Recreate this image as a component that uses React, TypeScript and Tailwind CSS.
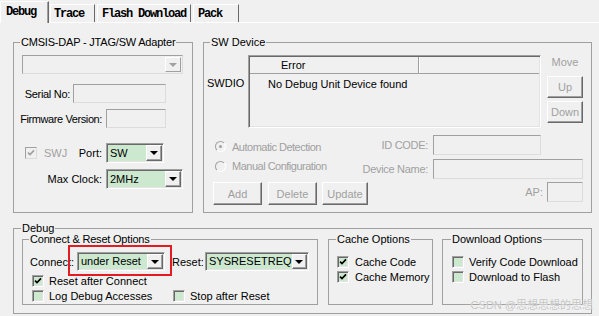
import React from "react";

const sunken =
  "border border-t-[#a0a0a0] border-l-[#a0a0a0] border-r-white border-b-white shadow-[inset_1px_1px_0_#696969,inset_-1px_-1px_0_#e3e3e3]";
const soft =
  "border border-t-[#a0a0a0] border-l-[#a0a0a0] border-r-[#dcdcdc] border-b-[#dcdcdc]";
const raised =
  "border border-t-white border-l-white border-r-[#696969] border-b-[#696969] shadow-[inset_-1px_-1px_0_#a0a0a0]";
const raisedLight =
  "border border-t-white border-l-white border-r-[#a0a0a0] border-b-[#a0a0a0]";

function Arrow({ gray }: { gray?: boolean }) {
  return (
    <span
      className={`w-0 h-0 border-x-[4px] border-x-transparent border-t-[4px] ${
        gray ? "border-t-[#a0a0a0]" : "border-t-black"
      }`}
    />
  );
}

function Combo({ className, text }: { className: string; text: string }) {
  return (
    <div className={`${sunken} bg-[#cce8cf] flex p-[1px] ${className}`}>
      <span className="flex-1 flex items-center pl-[2px] leading-none">{text}</span>
      <span className={`${raised} bg-[#f0f0f0] w-[16px] flex items-center justify-center`}>
        <Arrow />
      </span>
    </div>
  );
}

function Field({ className }: { className: string }) {
  return <div className={`${soft} bg-[#f0f0f0] ${className}`} />;
}

function Check({ checked, disabled }: { checked?: boolean; disabled?: boolean }) {
  return (
    <span
      className={`${disabled ? soft : sunken} w-[12px] h-[12px] flex items-center justify-center shrink-0 ${
        disabled ? "bg-[#f0f0f0]" : "bg-[#cce8cf]"
      }`}
    >
      {checked && (
        <svg width="8" height="8" viewBox="0 0 8 8">
          <path
            d="M1 3.6 L3 5.6 L7 1.4"
            fill="none"
            stroke={disabled ? "#a0a0a0" : "#000"}
            strokeWidth="1.7"
          />
        </svg>
      )}
    </span>
  );
}

function Radio({ selected }: { selected?: boolean }) {
  return (
    <span className="w-[11px] h-[11px] rounded-full border border-t-[#a0a0a0] border-l-[#a0a0a0] border-r-white border-b-white bg-[#f0f0f0] flex items-center justify-center shrink-0">
      {selected && <span className="w-[3px] h-[3px] rounded-full bg-[#a0a0a0]" />}
    </span>
  );
}

function Btn({ className, label }: { className: string; label: string }) {
  return (
    <div className={`${raised} flex items-center justify-center text-[#a0a0a0] ${className}`}>
      {label}
    </div>
  );
}

export default function App() {
  return (
    <div className="font-['Liberation_Sans',Arial,sans-serif] relative w-[599px] h-[316px] overflow-hidden bg-[#f0f0f0] text-[11px] leading-[14px] text-black whitespace-nowrap">
      {/* tabs */}
      <div className="flex items-end h-[22px] font-['Liberation_Mono',monospace] font-bold text-[12px] tracking-[-1.2px] leading-[14px]">
        <div className="relative z-10 mb-[-1px] h-[22px] w-[49px] border-t border-l border-r border-t-white border-l-white border-r-[#696969] shadow-[inset_-1px_0_0_#a0a0a0] bg-[#f0f0f0] pl-[5px] pt-[3px]">
          Debug
        </div>
        <div className="ml-[1px] h-[18px] w-[45px] border-t border-l border-r border-t-white border-l-white border-r-[#696969] pl-[3px] pt-[2px]">
          Trace
        </div>
        <div className="ml-[2px] h-[18px] w-[94px] border-t border-l border-r border-t-white border-l-white border-r-[#696969] pl-[4px] pt-[2px]">
          Flash Download
        </div>
        <div className="ml-[2px] h-[18px] w-[46px] border-t border-l border-r border-t-white border-l-white border-r-[#696969] pl-[4px] pt-[2px]">
          Pack
        </div>
      </div>

      <div className="border-t border-white pt-[12px] pl-[13px]">
        <div className="flex">
          {/* adapter */}
          <fieldset className="w-[180px] h-[178px] border border-[#a0a0a0]">
            <legend className="ml-[6px] px-[1px] tracking-[-0.2px]">CMSIS-DAP - JTAG/SW Adapter</legend>
            <div className={`${soft} ml-[8px] mt-[6px] w-[161px] h-[19px] flex justify-end p-[1px]`}>
              <span className={`${raisedLight} w-[16px] flex items-center justify-center`}>
                <Arrow gray />
              </span>
            </div>
            <div className="flex items-center mt-[10px] h-[19px]">
              <span className="w-[56px] text-right tracking-[-0.3px]">Serial No:</span>
              <Field className="ml-[3px] w-[93px] h-[19px]" />
            </div>
            <div className="flex items-center mt-[6px] h-[19px]">
              <span className="w-[88px] text-right tracking-[-0.4px]">Firmware Version:</span>
              <Field className="ml-[4px] w-[60px] h-[19px]" />
            </div>
            <div className="flex items-center mt-[15px] h-[20px]">
              <div className="w-[88px] flex items-center self-stretch">
                <span className="ml-[11px]">
                  <Check checked disabled />
                </span>
                <span className="ml-[7px] text-[#a0a0a0]">SWJ</span>
                <span className="ml-auto">Port:</span>
              </div>
              <Combo className="ml-[4px] w-[58px] h-[20px]" text="SW" />
            </div>
            <div className="flex items-center mt-[6px] h-[20px]">
              <span className="w-[88px] text-right">Max Clock:</span>
              <Combo className="ml-[4px] w-[77px] h-[20px]" text="2MHz" />
            </div>
          </fieldset>

          {/* sw device */}
          <fieldset className="ml-[10px] w-[389px] h-[178px] border border-[#a0a0a0]">
            <legend className="ml-[6px] px-[1px]">SW Device</legend>
            <div className="flex mt-[6px]">
              <div className="w-[44px] pl-[3px] pt-[21px]">SWDIO</div>
              <div className={`${sunken} w-[293px] h-[73px] p-[1px]`}>
                <div className="flex h-[17px] border-b border-[#a0a0a0]">
                  <div className="w-[169px] border-r border-[#a0a0a0] pl-[31px] leading-[16px]">Error</div>
                  <div className="flex-1 border-l border-white" />
                </div>
                <div className="pl-[18px] pt-[3px]">No Debug Unit Device found</div>
              </div>
              <div className="ml-[6px] w-[36px] flex flex-col">
                <div className="text-center text-[#a0a0a0]">Move</div>
                <Btn className="mt-[7px] h-[22px]" label="Up" />
                <Btn className="mt-[3px] h-[22px]" label="Down" />
              </div>
            </div>

            <div className="flex items-center mt-[7px] h-[20px]">
              <div className="w-[229px] flex items-center self-stretch">
                <div className="flex items-center ml-[11px] mt-[3px]">
                  <Radio selected />
                  <span className="ml-[6px] text-[#a0a0a0] tracking-[-0.5px]">Automatic Detection</span>
                </div>
                <span className="ml-auto pr-[5px] text-[#a0a0a0] tracking-[-0.3px]">ID CODE:</span>
              </div>
              <Field className="w-[108px] h-[20px]" />
            </div>
            <div className="flex items-center mt-[4px] h-[20px]">
              <div className="w-[229px] flex items-center self-stretch">
                <div className="flex items-center ml-[11px] mt-[-6px]">
                  <Radio />
                  <span className="ml-[6px] text-[#a0a0a0] tracking-[-0.5px]">Manual Configuration</span>
                </div>
                <span className="ml-auto pr-[5px] text-[#a0a0a0] tracking-[-0.3px]">Device Name:</span>
              </div>
              <Field className="w-[150px] h-[20px]" />
            </div>
            <div className="flex items-start mt-[3px]">
              <Btn className="ml-[9px] w-[49px] h-[23px]" label="Add" />
              <Btn className="ml-[6px] w-[49px] h-[23px]" label="Delete" />
              <Btn className="ml-[5px] w-[46px] h-[23px]" label="Update" />
              <span className="ml-auto leading-[20px] text-[#a0a0a0]">AP:</span>
              <Field className="ml-[4px] mr-[8px] w-[36px] h-[20px]" />
            </div>
          </fieldset>
        </div>

        {/* debug */}
        <fieldset className="mt-[8px] w-[579px] h-[93px] border border-[#a0a0a0]">
          <legend className="ml-[7px] px-[1px]">Debug</legend>
          <div className="flex items-start pl-[8px] mt-[-3px]">
            <fieldset className="w-[296px] h-[73px] border border-[#a0a0a0]">
              <legend className="ml-[6px] px-[1px] tracking-[-0.2px]">Connect &amp; Reset Options</legend>
              <div className="flex items-center mt-[6px] h-[19px] pl-[7px]">
                <span className="w-[47px]">Connect:</span>
                <Combo className="w-[88px] h-[19px]" text="under Reset" />
                <span className="w-[40px] pl-[7px]">Reset:</span>
                <Combo className="w-[104px] h-[19px]" text="SYSRESETREQ" />
              </div>
              <div className="flex items-center mt-[3px] h-[14px] pl-[9px]">
                <Check checked />
                <span className="ml-[5px]">Reset after Connect</span>
              </div>
              <div className="flex items-center mt-[1px] h-[14px] pl-[9px]">
                <div className="w-[141px] flex items-center">
                  <Check />
                  <span className="ml-[5px]">Log Debug Accesses</span>
                </div>
                <Check />
                <span className="ml-[5px]">Stop after Reset</span>
              </div>
            </fieldset>

            <fieldset className="ml-[10px] w-[105px] h-[73px] border border-[#a0a0a0]">
              <legend className="ml-[7px] px-[1px]">Cache Options</legend>
              <div className="flex items-center mt-[9px] h-[14px] pl-[8px]">
                <Check checked />
                <span className="ml-[6px]">Cache Code</span>
              </div>
              <div className="flex items-center mt-[1px] h-[14px] pl-[8px]">
                <Check checked />
                <span className="ml-[6px]">Cache Memory</span>
              </div>
            </fieldset>

            <fieldset className="ml-[9px] w-[141px] h-[73px] border border-[#a0a0a0]">
              <legend className="ml-[8px] px-[1px]">Download Options</legend>
              <div className="flex items-center mt-[9px] h-[14px] pl-[9px]">
                <Check />
                <span className="ml-[5px]">Verify Code Download</span>
              </div>
              <div className="flex items-center mt-[1px] h-[14px] pl-[9px]">
                <Check />
                <span className="ml-[5px]">Download to Flash</span>
              </div>
            </fieldset>
          </div>
        </fieldset>
      </div>

      {/* annotation + watermark */}
      <div className="absolute left-[68px] top-[245px] w-[104px] h-[31px] border-2 border-[#e31b23]" />
      <div className="absolute right-[6px] bottom-[4px] text-[11px] text-[#c4c4c4] font-['Liberation_Sans','Noto_Sans_CJK_SC',sans-serif] [text-shadow:0_0_1px_#fff]">
        CSDN @思想思想的思想
      </div>
    </div>
  );
}
